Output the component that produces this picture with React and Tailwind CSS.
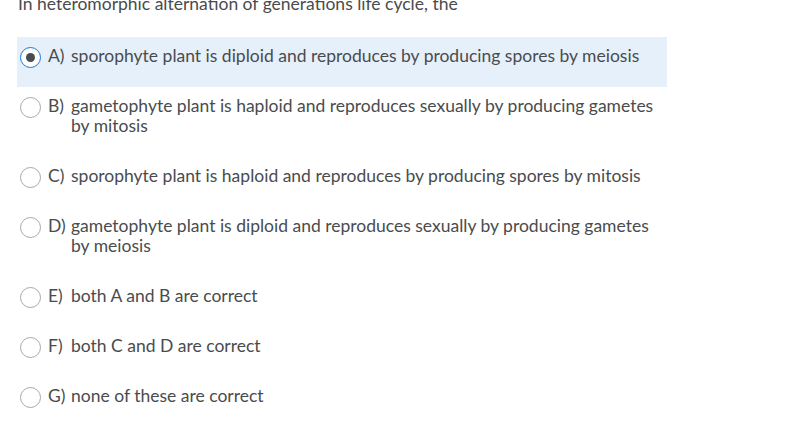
import React from "react";

const options = [
  { l: "A)", t: "sporophyte plant is diploid and reproduces by producing spores by meiosis", sel: true },
  { l: "B)", t: "gametophyte plant is haploid and reproduces sexually by producing gametes by mitosis" },
  { l: "C)", t: "sporophyte plant is haploid and reproduces by producing spores by mitosis" },
  { l: "D)", t: "gametophyte plant is diploid and reproduces sexually by producing gametes by meiosis" },
  { l: "E)", t: "both A and B are correct" },
  { l: "F)", t: "both C and D are correct" },
  { l: "G)", t: "none of these are correct" },
];

function Radio({ sel }) {
  return (
    <span className="relative h-[20px] w-[21px] shrink-0">
      <span
        className={
          "absolute left-0 top-[1px] flex h-[21px] w-[21px] items-center justify-center rounded-full bg-white " +
          (sel ? "border-[1.5px] border-[#1d7ad0]" : "border border-[#a5a8ab]")
        }
      >
        {sel && <span className="h-[9px] w-[9px] rounded-full bg-[#494c4e]" />}
      </span>
    </span>
  );
}

export default function App() {
  return (
    <div
      className="h-[421px] w-[804px] overflow-hidden bg-white text-[17.5px] leading-[20px] text-[#494c4e]"
      style={{ fontFamily: "Lato, 'Noto Sans', sans-serif" }}
    >
      <div className="-mt-[6px] pl-[18px]">In heteromorphic alternation of generations life cycle, the</div>
      <div className="mt-[23px] ml-[17px] w-[650px]">
        {options.map((o) => (
          <div
            key={o.l}
            className={"flex items-start gap-[7px] pt-[9px] pb-[21px] pl-[3px] pr-[10px] " + (o.sel ? "bg-[#e6f0fb]" : "")}
          >
            <Radio sel={o.sel} />
            <div className="flex">
              <span className="w-[23px] shrink-0">{o.l}</span>
              <span className="max-w-[590px]">{o.t}</span>
            </div>
          </div>
        ))}
      </div>
    </div>
  );
}
